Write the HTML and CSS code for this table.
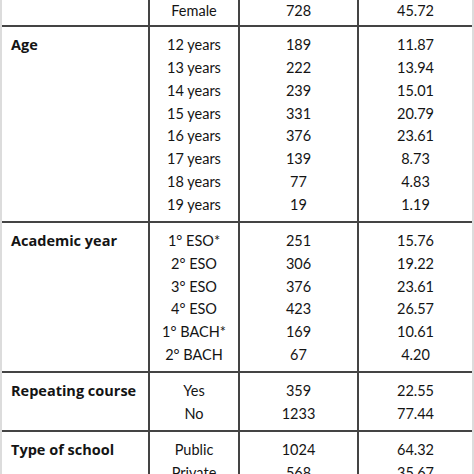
FILE: index.html
```html
<!DOCTYPE html>
<html>
<head>
<meta charset="utf-8">
<link rel="stylesheet" href="styles.css">
</head>
<body>
<div class="page">
  <div class="table">
    <div class="group first">
      <div class="cell label"></div>
      <div class="cell cat"><div class="row">Female</div></div>
      <div class="cell num"><div class="row">728</div></div>
      <div class="cell pct"><div class="row">45.72</div></div>
    </div>
    <div class="group">
      <div class="cell label"><div class="row">Age</div></div>
      <div class="cell cat">
        <div class="row">12 years</div><div class="row">13 years</div><div class="row">14 years</div><div class="row">15 years</div>
        <div class="row">16 years</div><div class="row">17 years</div><div class="row">18 years</div><div class="row">19 years</div>
      </div>
      <div class="cell num">
        <div class="row">189</div><div class="row">222</div><div class="row">239</div><div class="row">331</div>
        <div class="row">376</div><div class="row">139</div><div class="row">77</div><div class="row">19</div>
      </div>
      <div class="cell pct">
        <div class="row">11.87</div><div class="row">13.94</div><div class="row">15.01</div><div class="row">20.79</div>
        <div class="row">23.61</div><div class="row">8.73</div><div class="row">4.83</div><div class="row">1.19</div>
      </div>
    </div>
    <div class="group">
      <div class="cell label"><div class="row">Academic year</div></div>
      <div class="cell cat">
        <div class="row">1° ESO*</div><div class="row">2° ESO</div><div class="row">3° ESO</div>
        <div class="row">4° ESO</div><div class="row">1° BACH*</div><div class="row">2° BACH</div>
      </div>
      <div class="cell num">
        <div class="row">251</div><div class="row">306</div><div class="row">376</div>
        <div class="row">423</div><div class="row">169</div><div class="row">67</div>
      </div>
      <div class="cell pct">
        <div class="row">15.76</div><div class="row">19.22</div><div class="row">23.61</div>
        <div class="row">26.57</div><div class="row">10.61</div><div class="row">4.20</div>
      </div>
    </div>
    <div class="group">
      <div class="cell label"><div class="row">Repeating course</div></div>
      <div class="cell cat"><div class="row">Yes</div><div class="row">No</div></div>
      <div class="cell num"><div class="row">359</div><div class="row">1233</div></div>
      <div class="cell pct"><div class="row">22.55</div><div class="row">77.44</div></div>
    </div>
    <div class="group last">
      <div class="cell label"><div class="row">Type of school</div></div>
      <div class="cell cat"><div class="row">Public</div><div class="row">Private</div></div>
      <div class="cell num"><div class="row">1024</div><div class="row">568</div></div>
      <div class="cell pct"><div class="row">64.32</div><div class="row">35.67</div></div>
    </div>
  </div>
</div>
</body>
</html>
```
FILE: styles.css
```css
html, body {
  margin: 0;
  padding: 0;
  background: #ffffff;
}
.page {
  width: 474px;
  height: 474px;
  box-sizing: border-box;
  border-left: 2px solid #dcdcdc;
  border-right: 2px solid #dcdcdc;
  overflow: hidden;
  font-family: Lato, "Liberation Sans", sans-serif;
  font-size: 14.5px;
  color: #141414;
}
.table {
  display: flex;
  flex-direction: column;
}
.group {
  display: grid;
  grid-template-columns: 148px 90px 119px 113px;
  border-bottom: 2px solid #444444;
}
.group.last {
  border-bottom: none;
}
.cell {
  padding: 7px 0 4px 0;
  text-align: center;
}
.group.first .cell {
  padding-top: 0;
  padding-bottom: 3px;
}
.group.first .row {
  height: 22px;
  line-height: 22px;
}
.cell.label, .cell.cat, .cell.num {
  border-right: 2px solid #444444;
}
.cell.label {
  text-align: left;
  padding-left: 9px;
  font-family: "Open Sans", Lato, sans-serif;
  font-weight: 700;
  font-size: 14.5px;
}
.row {
  height: 22.86px;
  line-height: 22.86px;
  white-space: nowrap;
}
```
